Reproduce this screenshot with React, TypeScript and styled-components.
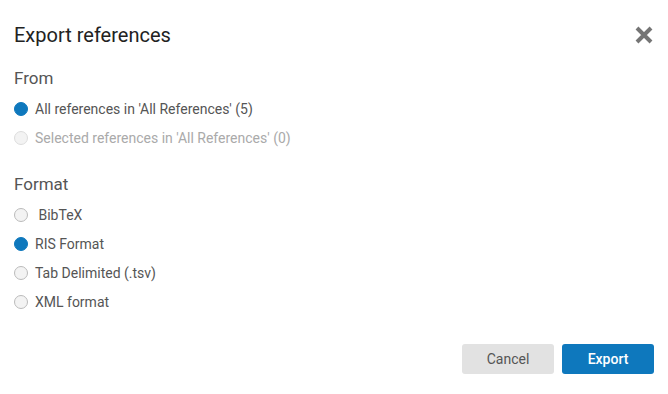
import React, { FC, useState } from "react"
import styled, { createGlobalStyle } from "styled-components"

const GlobalStyle = createGlobalStyle`
    html, body {
        margin: 0;
        padding: 0;
        background: #fff;
    }
    body {
        font-family: Roboto, "Liberation Sans", sans-serif;
        color: #555;
    }
`

const Dialog = styled.div`
    width: 668px;
    height: 394px;
    box-sizing: border-box;
    padding: 22px 14px 0 14px;
    display: flex;
    flex-direction: column;
`

const Header = styled.div`
    display: flex;
    justify-content: space-between;
    align-items: center;
    height: 26px;
`

const Title = styled.h2`
    margin: 0;
    font-size: 20px;
    font-weight: 400;
    color: #222;
`

const CloseButton = styled.button`
    border: 0;
    background: none;
    padding: 0;
    width: 22px;
    height: 22px;
    margin-right: -1px;
    display: flex;
    align-items: center;
    justify-content: center;
    cursor: pointer;
`

const Section = styled.div<{ $top: number }>`
    margin-top: ${(p) => p.$top}px;
    display: flex;
    flex-direction: column;
`

const SectionTitle = styled.div`
    font-size: 17px;
    color: #555;
    line-height: 20px;
    margin-bottom: 6px;
`

const Option = styled.label<{ $disabled?: boolean }>`
    display: flex;
    align-items: center;
    height: 29px;
    font-size: 14px;
    color: ${(p) => (p.$disabled ? "#aaa" : "#555")};
    cursor: ${(p) => (p.$disabled ? "default" : "pointer")};
`

const Dot = styled.span<{ $checked: boolean; $disabled?: boolean }>`
    width: 14px;
    height: 14px;
    box-sizing: border-box;
    border-radius: 50%;
    margin-right: 7px;
    flex-shrink: 0;
    background: ${(p) => (p.$checked ? "#0e78bd" : "#f3f3f3")};
    border: 1px solid ${(p) => (p.$checked ? "#0e78bd" : p.$disabled ? "#ddd" : "#bbb")};
`

const Footer = styled.div`
    margin-top: auto;
    margin-bottom: 20px;
    display: flex;
    justify-content: flex-end;
    gap: 8px;
`

const Button = styled.button<{ $primary?: boolean }>`
    width: 92px;
    height: 30px;
    border: 0;
    border-radius: 3px;
    font-family: Roboto, "Liberation Sans", sans-serif;
    font-size: 14px;
    font-weight: ${(p) => (p.$primary ? 500 : 400)};
    background: ${(p) => (p.$primary ? "#0e78bd" : "#e2e2e2")};
    color: ${(p) => (p.$primary ? "#fff" : "#555")};
    cursor: pointer;
`

const sources = [
    { id: "all", label: "All references in 'All References' (5)" },
    { id: "selected", label: "Selected references in 'All References' (0)", disabled: true },
]

const formats = [
    { id: "bib", label: "\u00a0BibTeX" },
    { id: "ris", label: "RIS Format" },
    { id: "tsv", label: "Tab Delimited (.tsv)" },
    { id: "xml", label: "XML format" },
]

const App: FC = () => {
    const [source, setSource] = useState("all")
    const [format, setFormat] = useState("ris")

    return (
        <>
            <GlobalStyle />
            <Dialog>
                <Header>
                    <Title>Export references</Title>
                    <CloseButton aria-label="Close">
                        <svg width="20" height="20" viewBox="0 0 20 20">
                            <path d="M3 3 L17 17 M17 3 L3 17" stroke="#757575" strokeWidth="4" strokeLinecap="butt" />
                        </svg>
                    </CloseButton>
                </Header>

                <Section $top={20}>
                    <SectionTitle>From</SectionTitle>
                    {sources.map((s) => (
                        <Option key={s.id} $disabled={s.disabled} onClick={() => !s.disabled && setSource(s.id)}>
                            <Dot $checked={source === s.id} $disabled={s.disabled} />
                            {s.label}
                        </Option>
                    ))}
                </Section>

                <Section $top={22}>
                    <SectionTitle>Format</SectionTitle>
                    {formats.map((f) => (
                        <Option key={f.id} onClick={() => setFormat(f.id)}>
                            <Dot $checked={format === f.id} />
                            {f.label}
                        </Option>
                    ))}
                </Section>

                <Footer>
                    <Button>Cancel</Button>
                    <Button $primary>Export</Button>
                </Footer>
            </Dialog>
        </>
    )
}

export default App
